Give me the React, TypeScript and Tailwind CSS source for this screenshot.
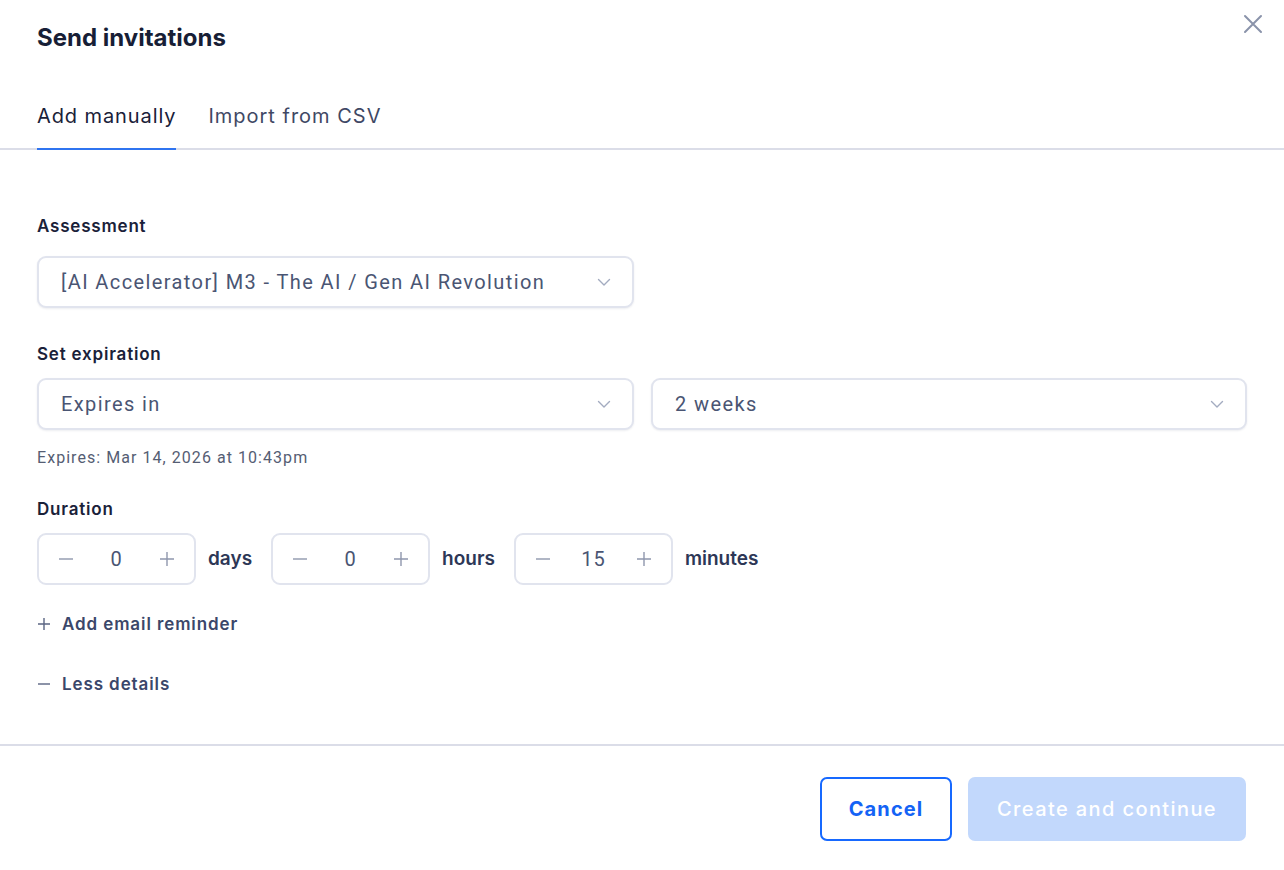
import React from "react";

const Chevron = () => (
  <svg width="16" height="16" viewBox="0 0 16 16" fill="none" className="shrink-0">
    <path d="M2.5 5.5 L8 11 L13.5 5.5" stroke="#a3abc0" strokeWidth="1.4" strokeLinecap="round" strokeLinejoin="round" />
  </svg>
);

const Select = ({ value, className = "" }: { value: string; className?: string }) => (
  <div
    className={`flex h-[52px] items-center justify-between rounded-[9px] border-2 border-[#e1e4ee] bg-white pl-[22px] pr-[20px] shadow-[0_1px_2px_rgba(30,40,80,0.08)] ${className}`}
  >
    <span className="text-[20px] tracking-[1.4px] text-[#4a5573]" style={{ fontFamily: "Roboto, sans-serif" }}>{value}</span>
    <Chevron />
  </div>
);

const Stepper = ({ value, unit }: { value: string; unit: string }) => (
  <div className="flex items-center">
    <div className="flex h-[52px] w-[159px] items-center justify-between rounded-[9px] border-2 border-[#e1e4ee] bg-white px-[19px]">
      <svg width="16" height="16" viewBox="0 0 16 16"><path d="M1 8 H15" stroke="#8f97ad" strokeWidth="1.4" /></svg>
      <span className="text-[20px] tracking-[1px] text-[#4a5573]" style={{ fontFamily: "Roboto, sans-serif" }}>{value}</span>
      <svg width="16" height="16" viewBox="0 0 16 16"><path d="M1 8 H15 M8 1 V15" stroke="#8f97ad" strokeWidth="1.4" /></svg>
    </div>
    <span className="ml-[12px] text-[19px] font-semibold text-[#2d3756]">{unit}</span>
  </div>
);

export default function App() {
  return (
    <div className="relative h-[870px] w-[1284px] bg-white" style={{ fontFamily: "Inter, 'Noto Sans', sans-serif" }}>
      <button className="absolute right-[21px] top-[14px] p-0">
        <svg width="20" height="20" viewBox="0 0 20 20">
          <path d="M2 2 L18 18 M18 2 L2 18" stroke="#8a93aa" strokeWidth="2" strokeLinecap="round" />
        </svg>
      </button>
      <div className="px-[37px] pt-[22px]">
        <h1 className="text-[24px] font-bold leading-[32px] tracking-[0px] text-[#171e36]">Send invitations</h1>
      </div>
      <div className="mt-[48px] flex gap-[32px] border-b-2 border-[#dbdde8] px-[37px]">
        <div className="-mb-[2px] border-b-2 border-[#2f74f0] pb-[18px] text-[20px] leading-[28px] tracking-[0.9px] text-[#1a2139]">Add manually</div>
        <div className="pb-[18px] text-[20px] leading-[28px] tracking-[1px] text-[#3f4864]">Import from CSV</div>
      </div>

      <div className="px-[37px] pt-[64px]">
        <div className="text-[17px] font-semibold leading-[24px] tracking-[0.8px] text-[#1a2139]">Assessment</div>
        <Select value="[AI Accelerator] M3 - The AI / Gen AI Revolution" className="mt-[18px] w-[597px]" />

        <div className="mt-[34px] text-[17px] font-semibold leading-[24px] tracking-[0.8px] text-[#1a2139]">Set expiration</div>
        <div className="mt-[12px] flex gap-[17px]">
          <Select value="Expires in" className="w-[597px]" />
          <Select value="2 weeks" className="w-[596px]" />
        </div>
        <div className="mt-[16px] text-[16px] leading-[24px] tracking-[1.05px] text-[#555d73]" style={{ fontFamily: "Roboto, sans-serif" }}>
          Expires: Mar 14, 2026 at 10:43pm
        </div>

        <div className="mt-[27px] text-[17px] font-semibold leading-[24px] tracking-[0.8px] text-[#1a2139]">Duration</div>
        <div className="mt-[12px] flex gap-[19px]">
          <Stepper value="0" unit="days" />
          <Stepper value="0" unit="hours" />
          <Stepper value="15" unit="minutes" />
        </div>

        <div className="mt-[27px] flex items-center text-[17px] font-semibold leading-[24px] tracking-[0.9px] text-[#3b476a]">
          <svg width="12" height="12" viewBox="0 0 12 12" className="mr-[12px] ml-[1px]"><path d="M0 6 H12 M6 0 V12" stroke="#5b6583" strokeWidth="1.4" /></svg>
          Add email reminder
        </div>
        <div className="mt-[36px] flex items-center text-[17px] font-semibold leading-[24px] tracking-[0.9px] text-[#3b476a]">
          <svg width="12" height="12" viewBox="0 0 12 12" className="mr-[12px] ml-[1px]"><path d="M0 6 H12" stroke="#5b6583" strokeWidth="1.4" /></svg>
          Less details
        </div>
      </div>

      <div className="mt-[48px] border-t-2 border-[#dbdde8]">
        <div className="flex justify-end gap-[16px] px-[38px] pt-[31px]">
          <button className="h-[64px] w-[132px] rounded-[7px] border-2 border-[#1769ff] bg-white text-[20px] font-bold tracking-[1.1px] text-[#1463f5]">
            Cancel
          </button>
          <button className="h-[64px] w-[278px] rounded-[7px] bg-[#c2d8fc] text-[20px] font-medium tracking-[1.4px] text-white">
            Create and continue
          </button>
        </div>
      </div>
    </div>
  );
}
